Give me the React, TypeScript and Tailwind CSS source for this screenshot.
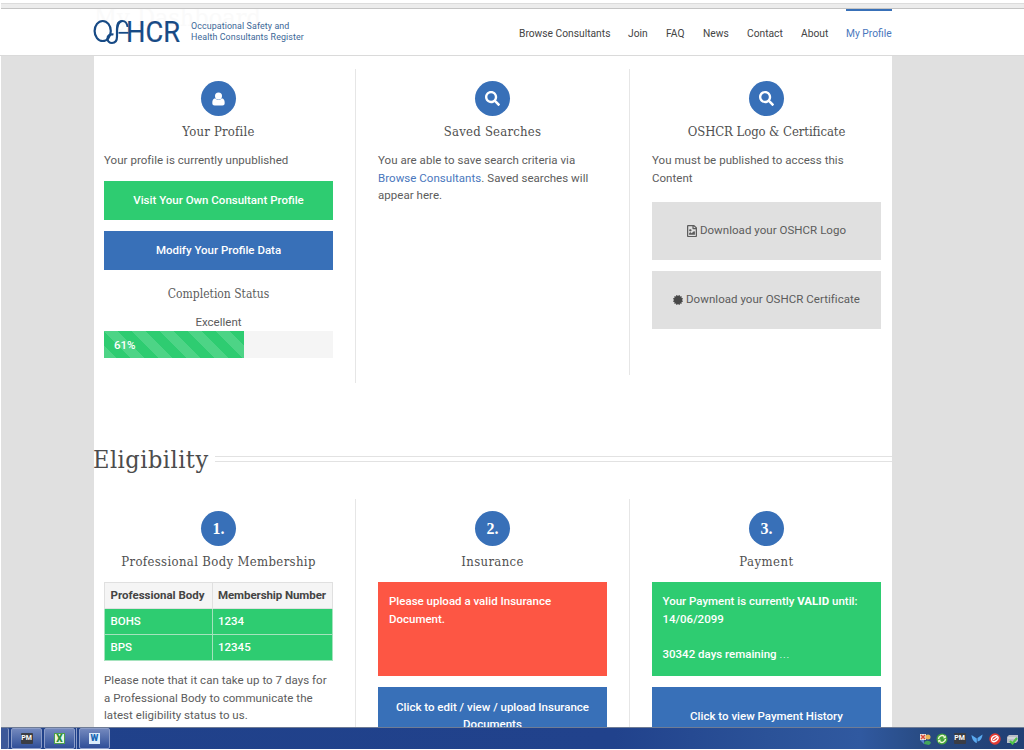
import React from 'react';
import { FaSearch, FaCertificate, FaRegFileImage } from 'react-icons/fa';

const SLAB = "font-['DejaVu_Serif_Condensed','DejaVu_Serif',serif]";

const NAV = [
  { label: 'Browse Consultants', width: 'w-[91px]' },
  { label: 'Join', width: 'w-[20px]' },
  { label: 'FAQ', width: 'w-[19px]' },
  { label: 'News', width: 'w-[26px]' },
  { label: 'Contact', width: 'w-[36px]' },
  { label: 'About', width: 'w-[27px]' },
];

const MEMBERSHIPS = [
  { body: 'BOHS', number: '1234' },
  { body: 'BPS', number: '12345' },
];

const Logo = () => (
  <svg width="88" height="28" viewBox="0 0 88 28" fill="none" stroke="#174a85" strokeWidth="2.2">
    <ellipse cx="9.700" cy="13" rx="8.100" ry="10" />
    <path d="M20.500 16.500c-3.500-.8-6 1-6 4 0 2.800 2 4.500 4.500 4.500 4 0 5-3 5-6.500V11c0-5 1.500-8 4.800-8" />
    <path d="M24 14c0-6 2-11 5.500-11 2.500 0 4.500 2 5 6" strokeWidth="1.800" />
    <path d="M25.500 14.800h10" strokeWidth="1.800" />
    <text x="33" y="24" fontFamily="Roboto, sans-serif" fontSize="29" fill="#174a85" strokeWidth="0.200" textLength="54" lengthAdjust="spacingAndGlyphs">HCR</text>
  </svg>
);

const UserIcon = () => (
  <svg width="13" height="14" viewBox="0 0 13 14" fill="currentColor">
    <circle cx="6.500" cy="3.900" r="3.500" />
    <path d="M3.200 6.300C1.200 6.600.3 8.300.3 11c0 1.700.9 2.500 2.300 2.500h7.800c1.400 0 2.300-.8 2.300-2.500 0-2.700-.9-4.400-2.900-4.700-1.900 2-4.700 2-6.600 0z" />
  </svg>
);

const Circle = ({ children }: { children: React.ReactNode }) => (
  <div className="mx-auto flex h-[35px] w-[35px] items-center justify-center rounded-full bg-[#3870b8] text-white">
    {children}
  </div>
);

const StepNumber = ({ children }: { children: React.ReactNode }) => (
  <span className="font-['Liberation_Serif',serif] text-[16px] font-bold">{children}</span>
);

const Title = ({ children, tracking = 'tracking-[0.22px]' }: { children: React.ReactNode; tracking?: string }) => (
  <h3 className={`mt-[6px] h-[20px] text-center text-[13px] leading-[20px] whitespace-nowrap text-[#505050] ${tracking} ${SLAB}`}>
    {children}
  </h3>
);

const Header = () => (
  <header className="relative h-[47px] overflow-hidden border-b border-[#dadada] bg-white">
    <div className={`absolute top-[-4px] left-[94px] text-[25px] leading-[26px] whitespace-nowrap text-[#fafafa] ${SLAB}`}>My Dashboard</div>
    <div className="relative ml-[93px] flex h-[46px] w-[799px] justify-between">
      <div className="flex gap-[10px] pt-[9px]">
        <Logo />
        <div className="pt-[3px] text-[8.900px] leading-[10.500px] tracking-[0.100px] whitespace-nowrap text-[#3c6797]">
          Occupational Safety and
          <br />
          Health Consultants Register
        </div>
      </div>
      <nav className="flex gap-[18px] text-[10.250px] leading-[50px] whitespace-nowrap text-[#444]">
        {NAV.map((item) => (
          <a key={item.label} className={item.width}>{item.label}</a>
        ))}
        <a className="h-[46px] w-[46px] border-t-2 border-[#3870b8] leading-[46px] text-[#4a77bd]">My Profile</a>
      </nav>
    </div>
  </header>
);

const ProfileSection = () => (
  <section className="flex h-[314px] items-start">
    <div className="h-[314px] w-[262px] border-r border-[#e6e6e6] pt-[12px] pr-[22px] pl-[10px]">
      <Circle><UserIcon /></Circle>
      <Title>Your Profile</Title>
      <p className="mt-[10px] tracking-[0.040px]">Your profile is currently unpublished</p>
      <button className="mt-[11px] block h-[39px] w-full bg-[#2ecc71] pt-px font-medium text-white">Visit Your Own Consultant Profile</button>
      <button className="mt-[11px] block h-[39px] w-full bg-[#3870b8] pt-px font-medium text-white">Modify Your Profile Data</button>
      <h4 className={`mt-[15px] text-center text-[12px] leading-[18px] ${SLAB}`}>Completion Status</h4>
      <p className="mt-[11px] text-center">Excellent</p>
      <div className="h-[27px] bg-[#f5f5f5]">
        <div className="h-full w-[61%] bg-[#2ecc71] bg-[linear-gradient(45deg,rgba(255,255,255,.15)_25%,transparent_25%,transparent_50%,rgba(255,255,255,.15)_50%,rgba(255,255,255,.15)_75%,transparent_75%)] bg-[length:28px_28px] pl-[10px] leading-[28px] font-medium text-white">61%</div>
      </div>
    </div>
    <div className="h-[306px] w-[274px] border-r border-[#e6e6e6] px-[22px] pt-[12px]">
      <Circle><FaSearch size={15} /></Circle>
      <Title>Saved Searches</Title>
      <p className="mt-[10px] tracking-[0.040px]">
        You are able to save search criteria via
        <br />
        <a className="text-[#4a77bd]">Browse Consultants</a>. Saved searches will
        <br />
        appear here.
      </p>
    </div>
    <div className="w-[262px] pt-[12px] pr-[11px] pl-[22px]">
      <Circle><FaSearch size={15} /></Circle>
      <Title tracking="tracking-[-0.080px]">OSHCR Logo &amp; Certificate</Title>
      <p className="mt-[10px] tracking-[0.040px]">
        You must be published to access this
        <br />
        Content
      </p>
      <button className="mt-[15px] flex h-[58px] w-full items-center justify-center gap-[3px] bg-[#e0e0e0] tracking-[0.040px]">
        <FaRegFileImage className="h-[12px] w-[10px]" preserveAspectRatio="none" />
        Download your OSHCR Logo
      </button>
      <button className="mt-[11px] flex h-[58px] w-full items-center justify-center gap-[3px] bg-[#e0e0e0] tracking-[0.040px]">
        <FaCertificate size={10} color="#484848" />
        Download your OSHCR Certificate
      </button>
    </div>
  </section>
);

const EligibilitySection = () => (
  <section className="flex h-[228px] items-stretch">
    <div className="w-[262px] border-r border-[#e6e6e6] pt-[12px] pr-[22px] pl-[10px]">
      <Circle><StepNumber>1.</StepNumber></Circle>
      <Title tracking="tracking-[0.350px]">Professional Body Membership</Title>
      <table className="mt-[10px] w-full table-fixed border-collapse text-left">
        <thead>
          <tr className="h-[26px] bg-[#f5f5f5] text-[#444]">
            <th className="w-[108px] border border-[#e0e0e0] pl-[5.500px] font-bold whitespace-nowrap">Professional Body</th>
            <th className="border border-[#e0e0e0] pl-[5px] font-bold whitespace-nowrap">
              <span className="tracking-[-0.080px]">Membership Number</span>
            </th>
          </tr>
        </thead>
        <tbody>
          {MEMBERSHIPS.map((m) => (
            <tr key={m.body} className="h-[26px] bg-[#2ecc71] font-medium text-white">
              <td className="border border-[#a5e3bd] pl-[5.500px]">{m.body}</td>
              <td className="border border-[#a5e3bd] pl-[5px]">{m.number}</td>
            </tr>
          ))}
        </tbody>
      </table>
      <p className="mt-[11px] tracking-[0.040px] whitespace-nowrap">
        Please note that it can take up to 7 days for
        <br />
        a Professional Body to communicate the
        <br />
        latest eligibility status to us.
      </p>
    </div>
    <div className="w-[274px] border-r border-[#e6e6e6] px-[22px] pt-[12px]">
      <Circle><StepNumber>2.</StepNumber></Circle>
      <Title tracking="tracking-[0.350px]">Insurance</Title>
      <div className="mt-[10px] h-[94px] bg-[#fd5644] px-[11px] py-[11px] font-medium text-white">
        Please upload a valid Insurance
        <br />
        Document.
      </div>
      <button className="mt-[11px] block h-[58px] w-full bg-[#3870b8] font-medium text-white">
        Click to edit / view / upload Insurance
        <br />
        Documents
      </button>
    </div>
    <div className="w-[262px] pt-[12px] pr-[11px] pl-[22px]">
      <Circle><StepNumber>3.</StepNumber></Circle>
      <Title tracking="tracking-[0.450px]">Payment</Title>
      <div className="mt-[10px] h-[94px] bg-[#2ecc71] px-[10.500px] py-[11px] font-medium whitespace-nowrap text-white">
        Your Payment is currently <b>VALID</b> until:
        <br />
        14/06/2099
        <br />
        <br />
        30342 days remaining <span className="font-light tracking-[0.800px]">...</span>
      </div>
      <button className="mt-[11px] block h-[58px] w-full bg-[#3870b8] pt-px font-medium text-white">Click to view Payment History</button>
    </div>
  </section>
);

const TaskButton = ({ children }: { children: React.ReactNode }) => (
  <div className="flex h-[21px] w-[31px] items-center justify-center rounded-[2px] border border-[#8c9dc8] bg-linear-to-b from-[#7388bd] to-[#304f98]">
    {children}
  </div>
);

const PmIcon = () => (
  <span className="flex h-[11px] w-[12px] items-center justify-center rounded-[1px] bg-[#3a3d45] text-[7px] leading-none font-bold text-white">PM</span>
);

const Taskbar = () => (
  <footer className="ml-px flex h-[22px] items-center justify-between border-t border-[#6f7c95] bg-[linear-gradient(90deg,#20418a_0%,#21428c_60%,#2b5298_75%,#3059a0_84%,#27497f_91%,#213f74_100%)] font-['Roboto',sans-serif]">
    <div className="flex items-center">
      <div className="mr-[2px] h-[21px] w-[8px] rounded-r-[2px] border-r border-[#8c9dc8] bg-[#3c5899]" />
      <TaskButton><PmIcon /></TaskButton>
      <div className="w-[2px]" />
      <TaskButton>
        <span className="flex h-[11px] w-[11px] items-center justify-center border border-[#4ba04b] bg-[#e8f5e3] text-[10px] leading-none font-black text-[#2b8c34]">X</span>
      </TaskButton>
      <div className="mr-[2px] h-[21px] w-[2px] border-r border-[#8c9dc8]" />
      <TaskButton>
        <span className="flex h-[11px] w-[11px] items-center justify-center bg-[#dcedfb] text-[9px] leading-none font-black text-[#1767b5]">W</span>
      </TaskButton>
    </div>
    <div className="mr-[5px] flex items-center gap-[5.500px]">
      <svg width="12" height="12" viewBox="0 0 12 12">
        <path d="M1 1h6v6H1z" fill="#e9e2dc" />
        <path d="M2 2l4 4M6 2 2 6" stroke="#dc4935" strokeWidth="1.500" />
        <circle cx="9" cy="4" r="2.500" fill="#e9b554" />
        <path d="M5 11c0-4 6-4 7-1l-2 2z" fill="#43a85b" />
        <path d="M1 7h4v4z" fill="#5d86d0" />
      </svg>
      <svg width="12" height="12" viewBox="0 0 12 12">
        <circle cx="6" cy="6" r="5.500" fill="#42a33b" />
        <path d="M2.500 6a3.500 3.500 0 0 1 6-2.300M9.500 6a3.500 3.500 0 0 1-6 2.300" fill="none" stroke="#f0f7d8" strokeWidth="1.500" />
        <path d="M9.800 2.200v3H6.800zM2.200 9.800v-3h3z" fill="#f0f7d8" />
      </svg>
      <PmIcon />
      <svg width="12" height="12" viewBox="0 0 12 12" fill="#5aaaf0">
        <path d="M.5 2 5.800 5.500V10C3 9.500.8 6 .5 2zM11.500 1.500 6.500 5V8.500c3-.5 4.800-3.500 5-7z" />
      </svg>
      <svg width="12" height="12" viewBox="0 0 12 12">
        <circle cx="6" cy="6" r="5.700" fill="#e33a32" />
        <path d="M3 8c-2-4 4-7 6-4 1 3-4 6-6 4zm1-1 4-3" fill="none" stroke="#fff" strokeWidth="1.300" />
      </svg>
      <svg width="13" height="12" viewBox="0 0 13 12">
        <path d="M1 4l2-2h9v6l-2 2H1z" fill="#b9bec6" />
        <path d="M2 5h8" stroke="#e9ebee" />
        <path d="m4 8 2.500 2.500L11 5" fill="none" stroke="#50c247" strokeWidth="2.200" />
      </svg>
    </div>
  </footer>
);

export default function App() {
  return (
    <div className="flex h-[750px] w-[1024px] flex-col overflow-hidden bg-white font-['Roboto',sans-serif] text-[11.500px] leading-[17.500px] text-[#5c5c5c]">
      <div className="mt-[3px] ml-px h-[6px] border-y border-b-[#c4c4c4] border-t-[#dcdcdc] bg-[#ececec]" />
      <Header />
      <div className="ml-px h-[671px] overflow-hidden bg-[#e0e0e0]">
        <main className="ml-[93px] h-full w-[798px] bg-white pt-[13px]">
          <ProfileSection />
          <div className="mt-[60px] flex h-[34px] items-center gap-[6px]">
            <h2 className={`-ml-px text-[25px] leading-[34px] tracking-[0.500px] text-[#4c4c4c] ${SLAB}`}>Eligibility</h2>
            <div className="mb-[2px] h-[6px] flex-1 border-y border-[#e2e2e2]" />
          </div>
          <div className="h-[22px]" />
          <EligibilitySection />
        </main>
      </div>
      <Taskbar />
    </div>
  );
}
